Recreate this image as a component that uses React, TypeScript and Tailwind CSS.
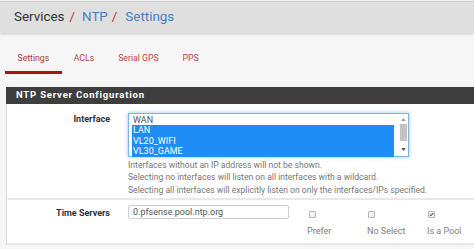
import React from "react";

const tabs = ["Settings", "ACLs", "Serial GPS", "PPS"];
const options = ["WAN", "LAN", "VL20_WIFI", "VL30_GAME"];
const selected = ["LAN", "VL20_WIFI", "VL30_GAME"];

function Checkbox({ checked }: { checked?: boolean }) {
  return (
    <div className="w-[7px] h-[7px] border border-[#b5b5b5] rounded-[1px] bg-[#f3f3f3] flex items-center justify-center">
      {checked && (
        <svg viewBox="0 0 8 8" className="w-[7px] h-[7px]">
          <path d="M1.2 4.2 L3.1 6 L6.8 1.6" fill="none" stroke="#222" strokeWidth="1.6" />
        </svg>
      )}
    </div>
  );
}

export default function App() {
  return (
    <div className="w-[474px] h-[249px] overflow-hidden bg-[#f6f6f6] font-['Roboto',sans-serif]">
      {/* breadcrumb bar */}
      <div className="mt-[1px] h-[32px] border-t border-[#cfcfcf] bg-[#dfdfdf] shadow-[0_1px_3px_rgba(0,0,0,0.18)] flex items-center px-[14px] text-[13.4px]">
        <span className="text-[#333]">Services</span>
        <span className="text-[#c9302c] ml-[5px] mr-[7px]">/</span>
        <span className="text-[#3f7fbf]">NTP</span>
        <span className="text-[#c9302c] ml-[4px] mr-[8px]">/</span>
        <span className="text-[#3f7fbf]">Settings</span>
      </div>

      {/* tabs */}
      <div className="flex mt-[12px] pl-[5px] text-[8.7px] leading-[10px]">
        {tabs.map((t, i) => (
          <div
            key={t}
            className={
              i === 0
                ? "px-[12.5px] pt-[8px] pb-[8px] border-b-[3px] border-[#a8141a] text-[#a8383a]"
                : "px-[12px] pt-[8px] pb-[8px] border-b-[3px] border-transparent text-[#b44446]"
            }
          >
            {t}
          </div>
        ))}
      </div>

      {/* panel */}
      <div className="mt-[13px] ml-[6px] w-[500px]">
        <div className="h-[17px] bg-[#3e3e3e] text-white font-bold text-[9.5px] tracking-[0.8px] flex items-center pl-[10px]">
          NTP Server Configuration
        </div>
        <div className="bg-white border-l border-[#dcdcdc]">
          {/* Interface row */}
          <div className="flex pt-[9px] pb-[2px] border-b-2 border-[#e8e8e8]">
            <div className="w-[103px] text-right text-[9px] font-bold text-[#333] leading-[10.5px] pt-[0.5px]">
              Interface
            </div>
            <div className="ml-[18px]">
              <div className="w-[281px] h-[44px] border border-[#7db4e6] shadow-[0_0_4px_rgba(102,175,233,0.7)] bg-white flex pl-[3px] pt-[0.5px]">
                <div className="flex-1 text-[9px] leading-[10.5px]">
                  {options.map((o) => (
                    <div
                      key={o}
                      className={
                        selected.includes(o)
                          ? "bg-[#1e8df5] text-white pl-[1px] mr-[4px]"
                          : "text-[#555] pl-[1px]"
                      }
                    >
                      {o}
                    </div>
                  ))}
                </div>
                <div className="w-[10px] flex flex-col items-center pt-[2px]">
                  <svg viewBox="0 0 6 4" className="w-[5px] h-[3px] mt-[1px]">
                    <path d="M0 4 L3 0 L6 4 Z" fill="#9a9a9a" />
                  </svg>
                  <div className="w-[7px] h-[17px] bg-[#c3c3c3] mt-[3px]" />
                  <svg viewBox="0 0 6 4" className="w-[5px] h-[3px] mt-[7px]">
                    <path d="M0 0 L6 0 L3 4 Z" fill="#555" />
                  </svg>
                </div>
              </div>
              <div className="mt-[1.5px] text-[8.6px] leading-[12.5px] text-[#777] whitespace-nowrap">
                <div>Interfaces without an IP address will not be shown.</div>
                <div>Selecting no interfaces will listen on all interfaces with a wildcard.</div>
                <div>Selecting all interfaces will explicitly listen on only the interfaces/IPs specified.</div>
              </div>
            </div>
          </div>

          {/* Time Servers row */}
          <div className="flex h-[45px] pt-[5px] border-b-2 border-[#e8e8e8]">
            <div className="w-[103px] text-right text-[9px] font-bold text-[#333] leading-[14px] pt-[1px]">
              Time Servers
            </div>
            <div className="ml-[18px] w-[161px] h-[14px] border border-[#cfcfcf] rounded-[2px] text-[9px] leading-[12px] text-[#555] pl-[4px]">
              0.pfsense.pool.ntp.org
            </div>
            <div className="ml-[18px] w-[60px] flex flex-col pt-[6px]">
              <div className="ml-[2px]">
                <Checkbox />
              </div>
              <div className="mt-[8px] text-[9px] leading-[10px] text-[#808080]">Prefer</div>
            </div>
            <div className="w-[60px] flex flex-col pt-[6px]">
              <div className="ml-[1px]">
                <Checkbox />
              </div>
              <div className="mt-[8px] text-[9px] leading-[10px] text-[#808080]">No Select</div>
            </div>
            <div className="w-[60px] flex flex-col pt-[6px]">
              <div className="ml-[1px]">
                <Checkbox checked />
              </div>
              <div className="mt-[8px] text-[9px] leading-[10px] text-[#808080]">Is a Pool</div>
            </div>
          </div>
        </div>
      </div>
    </div>
  );
}
